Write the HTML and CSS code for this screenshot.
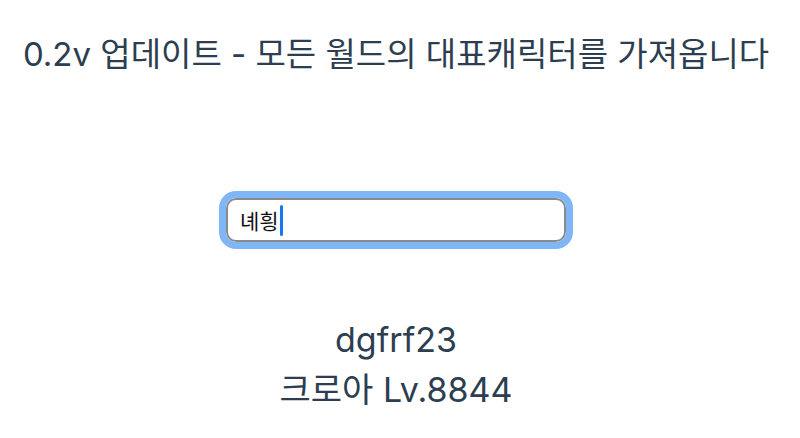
FILE: index.html
```html
<!DOCTYPE html>
<html lang="ko">
<head>
    <meta charset="UTF-8">
    <meta name="viewport" content="width=device-width, initial-scale=1.0">
    <title>대표캐릭터</title>
    <link rel="stylesheet" href="styles.css">
</head>
<body>
    <div class="app">
        <h1 class="title">0.2v 업데이트 - 모든 월드의 대표캐릭터를 가져옵니다</h1>

        <!-- 검색 입력 -->
        <div class="search">
            <div class="search-box">
                <span class="typed">녜힁</span><span class="caret"></span>
            </div>
        </div>

        <div class="result">
            <p class="name">dgfrf23</p>
            <p class="char">크로아 Lv.8844</p>
        </div>
    </div>
</body>
</html>
```

FILE: styles.css
```css
body {
    margin: 0;
    background-color: #ffffff;
    font-family: Inter, "Noto Sans CJK KR", sans-serif;
    color: #2c3e50;
}
.app {
    display: flex;
    flex-direction: column;
    align-items: center;
    height: 438px;
    padding-right: 8px;
}
.title {
    margin: 32px 0 0;
    font-size: 33px;
    font-weight: normal;
    line-height: 44px;
    white-space: nowrap;
}
.search {
    margin-top: 122px;
}
.search-box {
    width: 324px;
    height: 40px;
    border: 2px solid #8a8a8a;
    border-radius: 10px;
    outline: 7px solid #80b6f6;
    display: flex;
    align-items: center;
    padding-left: 12px;
    background: #fff;
}
.typed {
    font-family: "Noto Sans CJK KR", sans-serif;
    font-size: 21px;
    color: #111;
    line-height: 30px;
}
.caret {
    display: inline-block;
    width: 3px;
    height: 31px;
    margin-left: 1px;
    background-color: #1676f3;
    border-radius: 2px;
}
.result {
    margin-top: 73px;
    text-align: center;
}
.result p {
    margin: 0;
    font-size: 34px;
    line-height: 50px;
}
```
